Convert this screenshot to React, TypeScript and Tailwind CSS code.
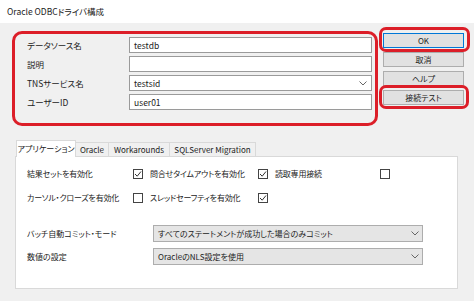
import React from "react";

const Chevron = () => (
  <svg width="8" height="5" viewBox="0 0 8 5" className="shrink-0">
    <polyline points="0.5,0.5 4,4 7.5,0.5" fill="none" stroke="#666" strokeWidth="1" />
  </svg>
);

const Check = ({ checked }: { checked: boolean }) => (
  <div className="w-[10px] h-[10px] border border-[#444] bg-white flex items-center justify-center">
    {checked && (
      <svg width="8" height="8" viewBox="0 0 8 8">
        <polyline points="1,4 3.2,6.2 7,1.5" fill="none" stroke="#333" strokeWidth="1" />
      </svg>
    )}
  </div>
);

const fields = [
  { label: "データソース名", value: "testdb", combo: false },
  { label: "説明", value: "", combo: false },
  { label: "TNSサービス名", value: "testsid", combo: true },
  { label: "ユーザーID", value: "user01", combo: false },
];

const buttons = ["OK", "取消", "ヘルプ", "接続テスト"];

const tabs = [
  { t: "アプリケーション", w: "w-[60px]" },
  { t: "Oracle", w: "w-[33px]" },
  { t: "Workarounds", w: "w-[61px]" },
  { t: "SQLServer Migration", w: "w-[86px]" },
];

export default function App() {
  return (
    <div
      className="relative w-[474px] h-[304px] bg-white text-[#222] text-[8px] leading-none whitespace-nowrap overflow-hidden [font-feature-settings:'palt']"
      style={{ fontFamily: '"Noto Sans CJK JP", "Noto Sans", sans-serif' }}
    >
      <div className="h-[23px] pl-[7px] flex items-center text-[8.5px]">Oracle ODBCドライバ構成</div>
      <div className="bg-[#f0f0f0] h-[278px] flex flex-col">
        <div className="flex items-start pt-[10px]">
          <div className="flex flex-col gap-[3px] pl-[27px] mt-[4px]">
            {fields.map((f) => (
              <div key={f.label} className="flex items-center h-[16px] text-[8.5px]">
                <div className="w-[102px]">{f.label}</div>
                <div className="w-[243px] h-[16px] bg-white border border-[#9a9a9a] flex items-center justify-between pl-[4px] pr-[4px]">
                  <span>{f.value}</span>
                  {f.combo && <Chevron />}
                </div>
              </div>
            ))}
          </div>
          <div className="flex flex-col gap-[4px] ml-[11px]">
            {buttons.map((b, i) => (
              <div
                key={b}
                className={`w-[81px] h-[15px] flex items-center justify-center bg-[#e1e1e1] border ${
                  i === 0 ? "border-[#0078d7]" : "border-[#adadad]"
                }`}
              >
                {b}
              </div>
            ))}
          </div>
        </div>

        <div className="mt-[29px] flex items-end pl-[16px] h-[17px]">
          {tabs.map((tb, i) => (
            <div
              key={tb.t}
              className={`${tb.w} flex items-center justify-center border border-[#d9d9d9] ${
                i === 0
                  ? "h-[17px] bg-white border-b-0 relative z-10 -mb-px"
                  : "h-[14px] bg-[#f0f0f0] border-l-0 border-b-0"
              }`}
            >
              {tb.t}
            </div>
          ))}
        </div>
        <div className="ml-[15px] w-[443px] h-[133px] bg-white border border-[#d9d9d9] pl-[11px] pt-[11px] flex flex-col">
          <div className="grid grid-cols-[106px_17px_108px_17px_105px_10px] items-center h-[12px] tracking-[-0.2px]">
            <span>結果セットを有効化</span>
            <Check checked />
            <span>問合せタイムアウトを有効化</span>
            <Check checked />
            <span>読取専用接続</span>
            <Check checked={false} />
          </div>
          <div className="grid grid-cols-[106px_17px_108px_17px] items-center h-[12px] mt-[12px] tracking-[-0.2px]">
            <span>カーソル・クローズを有効化</span>
            <Check checked={false} />
            <span>スレッドセーフティを有効化</span>
            <Check checked />
          </div>
          <div className="flex items-center mt-[21px]">
            <div className="w-[126px]">バッチ自動コミット・モード</div>
            <div className="w-[270px] h-[17px] bg-[#e5e5e5] border border-[#adadad] flex items-center justify-between pl-[4px] pr-[3px]">
              <span>すべてのステートメントが成功した場合のみコミット</span>
              <Chevron />
            </div>
          </div>
          <div className="flex items-center mt-[6px]">
            <div className="w-[126px]">数値の設定</div>
            <div className="w-[270px] h-[17px] bg-[#e5e5e5] border border-[#adadad] flex items-center justify-between pl-[4px] pr-[3px]">
              <span>OracleのNLS設定を使用</span>
              <Chevron />
            </div>
          </div>
        </div>
      </div>

      <div className="absolute left-[12px] top-[31px] w-[366px] h-[95px] border-[3px] border-[#dc1e28] rounded-[10px] pointer-events-none" />
      <div className="absolute left-[379px] top-[27px] w-[91px] h-[25px] border-[3px] border-[#dc1e28] rounded-[7px] pointer-events-none" />
      <div className="absolute left-[379px] top-[85px] w-[90px] h-[24px] border-[3px] border-[#dc1e28] rounded-[7px] pointer-events-none" />
    </div>
  );
}
